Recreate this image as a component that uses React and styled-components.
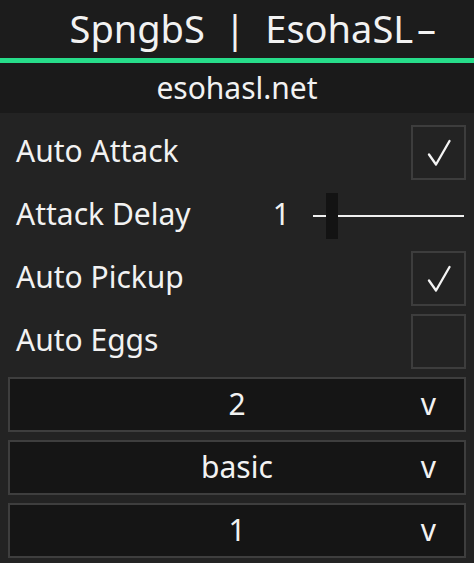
import styled, { createGlobalStyle } from 'styled-components';

const Global = createGlobalStyle`
  html, body {
    margin: 0;
    padding: 0;
    background: #232323;
  }
  * { box-sizing: border-box; }
`;

const Panel = styled.div`
  width: 474px;
  height: 563px;
  background: #232323;
  color: #f2f2f2;
  font-family: "Noto Sans", "Open Sans", sans-serif;
  display: flex;
  flex-direction: column;
  overflow: hidden;
`;

const TitleBar = styled.div`
  height: 63px;
  background: #1c1c1c;
  border-bottom: 5px solid #27dd8a;
  display: flex;
  align-items: center;
  justify-content: flex-end;
  padding-right: 38px;
  padding-bottom: 2px;
  font-size: 38px;
  white-space: pre;
`;

const SubBar = styled.div`
  height: 50px;
  background: #1a1a1a;
  display: flex;
  align-items: center;
  justify-content: center;
  font-size: 30px;
  padding-bottom: 2px;
`;

const Body = styled.div`
  display: flex;
  flex-direction: column;
  gap: 8px;
  padding: 12px 8px 0 8px;
`;

const Row = styled.div`
  height: 55px;
  display: flex;
  align-items: center;
  justify-content: space-between;
  padding-left: 8px;
  font-size: 30px;
`;

const Label = styled.span`
  padding-bottom: 4px;
`;

const Check = styled.div`
  width: 55px;
  height: 55px;
  border: 2px solid #3d3d3d;
  display: flex;
  align-items: center;
  justify-content: center;
  color: #f4f4f4;
`;

const SliderWrap = styled.div`
  display: flex;
  align-items: center;
  gap: 23px;
  margin-right: 2px;
`;

const SliderValue = styled.span`
  font-size: 30px;
  padding-bottom: 4px;
`;

const Track = styled.div`
  position: relative;
  width: 151px;
  height: 46px;
  display: flex;
  align-items: center;
  &::before {
    content: "";
    display: block;
    width: 100%;
    height: 2px;
    background: #f0f0f0;
  }
`;

const Handle = styled.div`
  position: absolute;
  left: 13px;
  top: 0;
  width: 12px;
  height: 46px;
  background: #131313;
`;

const Dropdown = styled.div`
  height: 55px;
  background: #151515;
  border: 2px solid #3e3e3e;
  display: flex;
  align-items: center;
  justify-content: center;
  position: relative;
  font-size: 30px;
  padding-bottom: 2px;
`;

const Arrow = styled.span`
  position: absolute;
  right: 28px;
  top: 50%;
  transform: translateY(-54%);
  font-size: 30px;
`;

const CheckMark = () => (
  <svg width="24" height="28" viewBox="0 0 24 28">
    <path
      d="M2 15.5 L9 25.5 L22.5 2"
      fill="none"
      stroke="#f4f4f4"
      strokeWidth="2.3"
      strokeLinecap="round"
      strokeLinejoin="round"
    />
  </svg>
);

const toggles = [
  { label: 'Auto Attack', on: true },
  { label: 'slider' },
  { label: 'Auto Pickup', on: true },
  { label: 'Auto Eggs', on: false },
];

export default function App() {
  return (
    <>
      <Global />
      <Panel>
        <TitleBar>{'SpngbS  |  EsohaSL\u200A\u2013'}</TitleBar>
        <SubBar>esohasl.net</SubBar>
        <Body>
          {toggles.map(t =>
            t.label === 'slider' ? (
              <Row key="slider">
                <Label>Attack Delay</Label>
                <SliderWrap>
                  <SliderValue>1</SliderValue>
                  <Track>
                    <Handle />
                  </Track>
                </SliderWrap>
              </Row>
            ) : (
              <Row key={t.label}>
                <Label>{t.label}</Label>
                <Check>{t.on && <CheckMark />}</Check>
              </Row>
            )
          )}
          {['2', 'basic', '1'].map(v => (
            <Dropdown key={v}>
              {v}
              <Arrow>v</Arrow>
            </Dropdown>
          ))}
        </Body>
      </Panel>
    </>
  );
}
